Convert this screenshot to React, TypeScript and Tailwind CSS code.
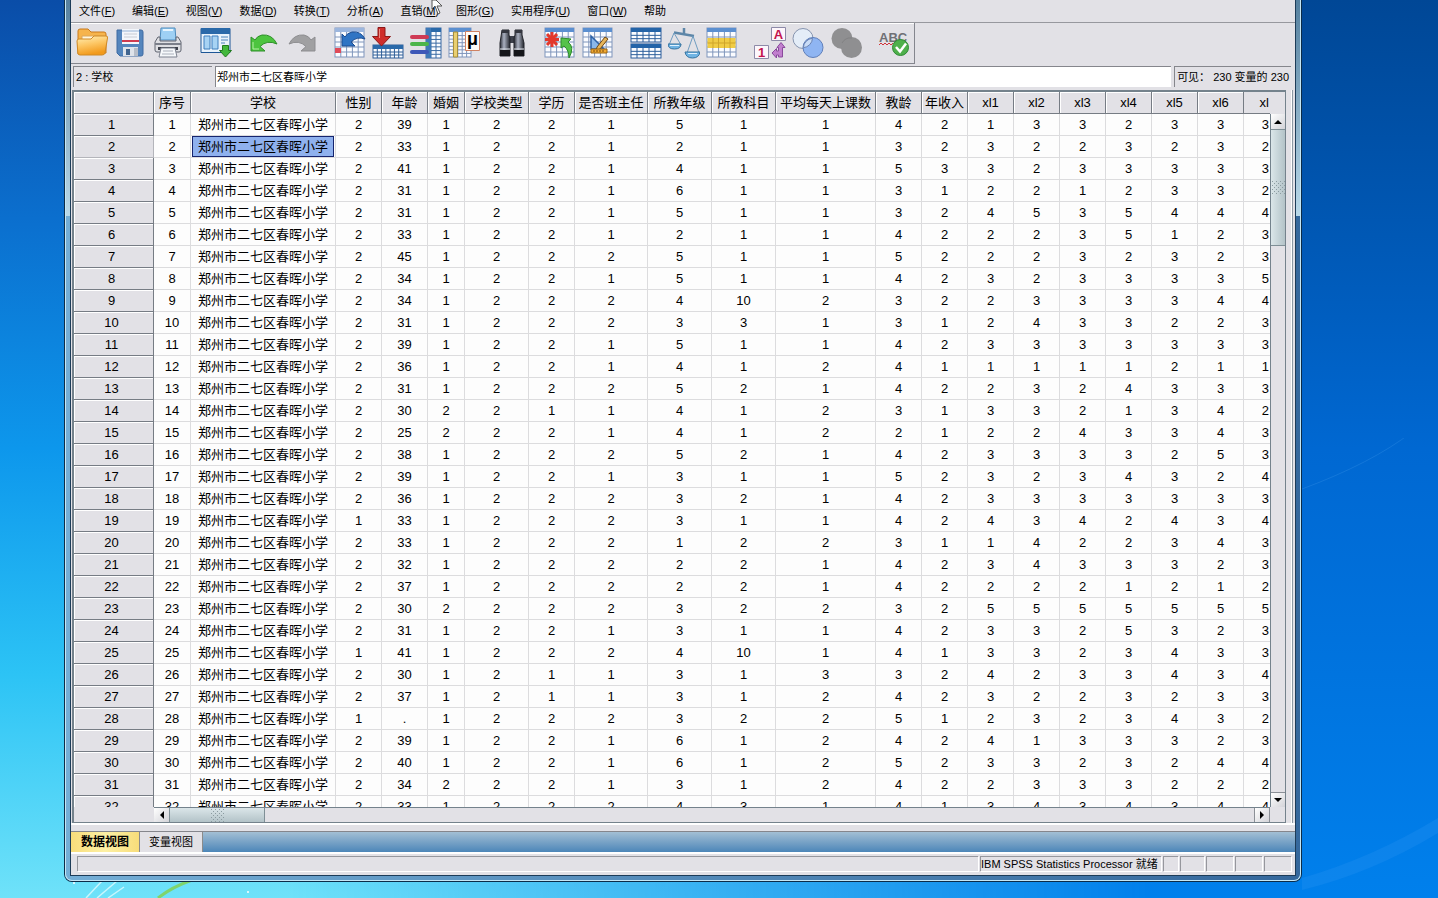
import { useState } from "react";
import type { ReactNode } from "react";
import clsx from "clsx";

const SCHOOL = "郑州市二七区春晖小学";

const menus = [
  { label: "文件", hotkey: "F" },
  { label: "编辑", hotkey: "E" },
  { label: "视图", hotkey: "V" },
  { label: "数据", hotkey: "D" },
  { label: "转换", hotkey: "T" },
  { label: "分析", hotkey: "A" },
  { label: "直销", hotkey: "M" },
  { label: "图形", hotkey: "G" },
  { label: "实用程序", hotkey: "U" },
  { label: "窗口", hotkey: "W" },
  { label: "帮助" },
];

const columns = [
  { name: "序号", width: 37 },
  { name: "学校", width: 145 },
  { name: "性别", width: 46 },
  { name: "年龄", width: 46 },
  { name: "婚姻", width: 37 },
  { name: "学校类型", width: 64 },
  { name: "学历", width: 46 },
  { name: "是否班主任", width: 73 },
  { name: "所教年级", width: 64 },
  { name: "所教科目", width: 64 },
  { name: "平均每天上课数", width: 100 },
  { name: "教龄", width: 46 },
  { name: "年收入", width: 46 },
  { name: "xl1", width: 46 },
  { name: "xl2", width: 46 },
  { name: "xl3", width: 46 },
  { name: "xl4", width: 46 },
  { name: "xl5", width: 46 },
  { name: "xl6", width: 46 },
];

// values after 学校, one line per case
const cases = [
  "2 39 1 2 2 1 5 1 1 4 2 1 3 3 2 3 3 3",
  "2 33 1 2 2 1 2 1 1 3 2 3 2 2 3 2 3 2",
  "2 41 1 2 2 1 4 1 1 5 3 3 2 3 3 3 3 3",
  "2 31 1 2 2 1 6 1 1 3 1 2 2 1 2 3 3 2",
  "2 31 1 2 2 1 5 1 1 3 2 4 5 3 5 4 4 4",
  "2 33 1 2 2 1 2 1 1 4 2 2 2 3 5 1 2 3",
  "2 45 1 2 2 2 5 1 1 5 2 2 2 3 2 3 2 3",
  "2 34 1 2 2 1 5 1 1 4 2 3 2 3 3 3 3 5",
  "2 34 1 2 2 2 4 10 2 3 2 2 3 3 3 3 4 4",
  "2 31 1 2 2 2 3 3 1 3 1 2 4 3 3 2 2 3",
  "2 39 1 2 2 1 5 1 1 4 2 3 3 3 3 3 3 3",
  "2 36 1 2 2 1 4 1 2 4 1 1 1 1 1 2 1 1",
  "2 31 1 2 2 2 5 2 1 4 2 2 3 2 4 3 3 3",
  "2 30 2 2 1 1 4 1 2 3 1 3 3 2 1 3 4 2",
  "2 25 2 2 2 1 4 1 2 2 1 2 2 4 3 3 4 3",
  "2 38 1 2 2 2 5 2 1 4 2 3 3 3 3 2 5 3",
  "2 39 1 2 2 1 3 1 1 5 2 3 2 3 4 3 2 4",
  "2 36 1 2 2 2 3 2 1 4 2 3 3 3 3 3 3 3",
  "1 33 1 2 2 2 3 1 1 4 2 4 3 4 2 4 3 4",
  "2 33 1 2 2 2 1 2 2 3 1 1 4 2 2 3 4 3",
  "2 32 1 2 2 2 2 2 1 4 2 3 4 3 3 3 2 3",
  "2 37 1 2 2 2 2 2 1 4 2 2 2 2 1 2 1 2",
  "2 30 2 2 2 2 3 2 2 3 2 5 5 5 5 5 5 5",
  "2 31 1 2 2 1 3 1 1 4 2 3 3 2 5 3 2 3",
  "1 41 1 2 2 2 4 10 1 4 1 3 3 2 3 4 3 3",
  "2 30 1 2 1 1 3 1 3 3 2 4 2 3 3 4 3 4",
  "2 37 1 2 1 1 3 1 2 4 2 3 2 2 3 2 3 3",
  "1 . 1 2 2 2 3 2 2 5 1 2 3 2 3 4 3 2",
  "2 39 1 2 2 1 6 1 2 4 2 4 1 3 3 3 2 3",
  "2 40 1 2 2 1 6 1 2 5 2 3 3 2 3 2 4 4",
  "2 34 2 2 2 1 3 1 2 4 2 2 3 3 3 2 2 2",
  "2 33 1 2 2 2 4 3 1 4 1 3 4 3 4 3 4 4",
].map((line) => line.split(" "));

function Icon({ children }: { children: ReactNode }) {
  return (
    <svg viewBox="0 0 32 32" className="size-8" aria-hidden="true">
      {children}
    </svg>
  );
}

// small data sheet used by many of the toolbar icons
function Sheet({ x = 1, y = 1, w = 29, h = 29, head = "#5b8fd0", line = "#7f95bb", cols = 5, rows = 5 }) {
  const top = y + 4;
  const stepX = w / cols;
  const stepY = (h - 4) / rows;
  return (
    <g>
      <rect x={x} y={y} width={w} height={h} fill="#fbfcff" stroke={line} />
      <rect x={x} y={y} width={w} height={4} fill={head} />
      {Array.from({ length: cols - 1 }, (_, i) => (
        <path key={`c${i}`} d={`M${x + stepX * (i + 1)} ${top}V${y + h}`} stroke={line} />
      ))}
      {Array.from({ length: rows - 1 }, (_, i) => (
        <path key={`r${i}`} d={`M${x} ${top + stepY * (i + 1)}H${x + w}`} stroke={line} />
      ))}
    </g>
  );
}

function OpenIcon() {
  return (
    <Icon>
      <defs>
        <linearGradient id="folder" x1="0" y1="0" x2="0.3" y2="1">
          <stop offset="0" stopColor="#fff0b8" />
          <stop offset="0.5" stopColor="#fdc765" />
          <stop offset="1" stopColor="#f29a1c" />
        </linearGradient>
      </defs>
      <path d="M2 27V4q0-2 2-2h8l3 3h13q2 0 2 2v19z" fill="#f6b44c" stroke="#c9791b" />
      <path d="M6 9h22v10H6z" fill="#fff6dc" stroke="#dca75a" />
      <path d="M1 14q0-2 2-2h12l3-3h12q2 0 1.500 2L29 26q-.4 2-3 2H4q-2 0-2.200-2z" fill="url(#folder)" stroke="#d08a26" />
    </Icon>
  );
}

function SaveIcon() {
  return (
    <Icon>
      <path d="M3 3h24q2 0 2 2v22q0 2-2 2H6l-3-3z" fill="#5485bd" stroke="#3e6ba2" />
      <path d="M8 2h17v15H8z" fill="#f3f6fb" />
      <path d="M8 4h17" stroke="#c4d4e8" strokeWidth="2" />
      <path d="M8 14h17" stroke="#cf3b50" strokeWidth="2" />
      <path d="M10 7h13M10 10h13" stroke="#c8ccd4" />
      <path d="M9 20h15v9H9z" fill="#dfe3ea" />
      <path d="M12 22h4v6h-4z" fill="#41648f" />
      <path d="M20 21h4v8h-4z" fill="#b7bdc8" />
    </Icon>
  );
}

function PrintIcon() {
  return (
    <Icon>
      <path d="M9 1h14l1 12H8z" fill="#9ed0f4" stroke="#4d8bbd" />
      <path d="M11 3h10" stroke="#e6f5ff" strokeWidth="2" />
      <path d="M6 10h2v4h16v-4h2l3 5v8q0 2-2 2H5q-2 0-2-2v-8z" fill="#dedfe3" stroke="#606470" />
      <path d="M3 17h26" stroke="#7b7f8a" strokeWidth="2" />
      <path d="M6 20h20v3H6z" fill="#3e424c" />
      <path d="M9 21h14l2 9H7z" fill="#f6f8fb" stroke="#7d828f" />
      <path d="M11 24h10M10 27h12" stroke="#aab0bb" />
    </Icon>
  );
}

function RecallIcon() {
  return (
    <Icon>
      <path d="M1 1.500h29v24H1z" fill="#e8f2fb" stroke="#1d5796" />
      <path d="M1 1h29v6H1z" fill="#2a69a9" />
      <path d="M4 9h6v13H4zM12 9h6v13h-6z" fill="#a7d3f4" stroke="#3f7fbd" />
      <path d="M21 10h7M21 13h7M21 16h4" stroke="#4c84bb" />
      <path d="M22.500 18.500h6v5h3L25.500 30l-6-6.500h3z" fill="#43b83c" stroke="#217a1e" />
    </Icon>
  );
}

function UndoIcon() {
  return (
    <Icon>
      <path d="M3 10v14h14l-5-4.500q7-7 17-2.500-5-10-15-9-5 1-7 5z" fill="#4cc43f" stroke="#2d8f28" />
      <path d="M5 15v7h6" fill="none" stroke="#b4f0a5" />
    </Icon>
  );
}

function RedoIcon() {
  return (
    <Icon>
      <path d="M29 10v14H15l5-4.500q-7-7-17-2.500 5-10 15-9 5 1 7 5z" fill="#a0a0a2" stroke="#8d8d90" />
    </Icon>
  );
}

function GoToCaseIcon() {
  return (
    <Icon>
      <Sheet head="#9cb6de" />
      <path d="M1 21h6v5H1z" fill="#e04a58" />
      <path d="M8 7v12h13l-4-4q6-6 14-3-4-8-13-7-5 1-7 5z" fill="#2f74c4" stroke="#1c4d92" />
    </Icon>
  );
}

function GoToVariableIcon() {
  return (
    <Icon>
      <Sheet y={18} h={13} w={30} head="#2a69a9" line="#2e5f98" rows={3} cols={7} />
      <path d="M6 .5h7v9h5.500L9.500 19 .5 9.500H6z" fill="#cf2e2b" stroke="#8b1717" />
      <path d="M7.500 2v9" stroke="#f08a80" />
    </Icon>
  );
}

function VariablesIcon() {
  return (
    <Icon>
      <Sheet x={16} w={15} h={30} head="#2a69a9" line="#3b6ba4" cols={3} rows={7} />
      <path d="M16 1h5v30h-5z" fill="#3d79b8" />
      <path d="M2 10h15" stroke="#cf3b55" strokeWidth="4" strokeLinecap="round" />
      <path d="M2 17h15" stroke="#4bb54a" strokeWidth="4" strokeLinecap="round" />
      <path d="M2 25h15" stroke="#3d58b8" strokeWidth="4" strokeLinecap="round" />
    </Icon>
  );
}

function DescriptivesIcon() {
  return (
    <Icon>
      <Sheet w={22} h={29} head="#5b8fd0" cols={5} rows={7} />
      <path d="M5.500 5h4v25h-4z" fill="#e9cf72" stroke="#a88f3a" />
      <path d="M17.500 4.500h14v19h-14z" fill="#fffdfa" stroke="#cf8263" />
      <text x="24.500" y="18" textAnchor="middle" fontSize="18" fontWeight="700" fontFamily="Liberation Sans, sans-serif">
        μ
      </text>
    </Icon>
  );
}

function FindIcon() {
  return (
    <Icon>
      <defs>
        <linearGradient id="barrel">
          <stop offset="0" stopColor="#2b2d36" />
          <stop offset="0.4" stopColor="#aab0c0" />
          <stop offset="1" stopColor="#23252c" />
        </linearGradient>
      </defs>
      <path d="M12 9h8v7h-8z" fill="#3b3e49" />
      <path d="M6 3h7v5l1 3v18H4V16z" fill="url(#barrel)" stroke="#23252c" />
      <path d="M19 3h7v5l2 8v13H18V11l1-3z" fill="url(#barrel)" stroke="#23252c" />
      <path d="M4 23h10v6H4zM18 23h10v6H18z" fill="#15161a" />
      <path d="M4 22h10M18 22h10" stroke="#dfe3ea" />
      <path d="M6 3h7v3H6zM19 3h7v3h-7z" fill="#34363f" />
    </Icon>
  );
}

function InsertCasesIcon() {
  return (
    <Icon>
      <Sheet />
      <path d="M8 5v15M1 12.500h14M3 7l10 11M13 7 3 18" stroke="#e2382c" strokeWidth="3" />
      <path d="M17 21V11l10 1-3 3q7 5 1 16 0-8-5-12z" fill="#55c24a" stroke="#2c8a2a" />
    </Icon>
  );
}

function InsertVariableIcon() {
  return (
    <Icon>
      <Sheet />
      <path d="M9 9v13h13z" fill="#8ab7ea" stroke="#2d62a8" strokeWidth="1.500" />
      <path d="M23 10l3 2-8 10-4 2 1-4z" fill="#e6b45a" stroke="#6d4714" />
      <path d="M9 22h16v4H9z" fill="#f0a932" stroke="#9b6412" />
      <path d="M12 23v2M15 23v2M18 23v2M21 23v2" stroke="#7a4b0c" />
    </Icon>
  );
}

function SplitIcon() {
  return (
    <Icon>
      <Sheet w={30} h={14} head="#2464a8" line="#2c5f9c" rows={3} />
      <Sheet y={17} w={30} h={14} head="#2464a8" line="#2c5f9c" rows={3} />
    </Icon>
  );
}

function WeightIcon() {
  return (
    <Icon>
      <path d="M16 1v6M6 5.500 26 9" stroke="#5d86a8" strokeWidth="2.500" />
      <path d="M6 6 1 18h12zM25 9l-6 17h12z" fill="none" stroke="#6f9cc0" />
      <path d="M0 17h13q0 5-6.500 5T0 17z" fill="#6fb4e4" stroke="#35729f" />
      <path d="M17 25h15q-1 6-7.500 6T17 25z" fill="#6fb4e4" stroke="#35729f" />
      <path d="M2 18.500h9M20 26.500h9" stroke="#dff2ff" />
    </Icon>
  );
}

function SelectCasesIcon() {
  return (
    <Icon>
      <Sheet />
      <path d="M1.500 11h28v10h-28z" fill="#f0cc45" />
      <path d="M7 11v10M12.500 11v10M18.500 11v10M24 11v10M1.500 16h28" stroke="#cfa52a" />
    </Icon>
  );
}

function ValueLabelsIcon() {
  return (
    <Icon>
      <path d="M17.500.5h14v13h-14z" fill="#fdf6fb" stroke="#8d8aa8" />
      <path d="M.5 18.500h14v13H.5z" fill="#fdf6fb" stroke="#8d8aa8" />
      <text x="24.500" y="12" textAnchor="middle" fontSize="13" fontWeight="700" fill="#c3124e" fontFamily="Liberation Sans, sans-serif">
        A
      </text>
      <text x="7.500" y="30" textAnchor="middle" fontSize="13" fontWeight="700" fill="#c3124e" fontFamily="Liberation Sans, sans-serif">
        1
      </text>
      <path d="M27 15.500l4 5h-2.500V30h-4v-2h-2v3L18 26l4.500-4.500V24h2v-3.500H23z" fill="#c17fce" stroke="#8a4a9d" />
    </Icon>
  );
}

function UseSetsIcon() {
  return (
    <Icon>
      <circle cx="11" cy="11.500" r="10" fill="#e4edf8" stroke="#8795b0" />
      <circle cx="21" cy="20.500" r="10" fill="#8fb5f2" stroke="#5f7fba" />
      <path d="M20.500 11.300A10 10 0 0 1 11.300 20.700 10 10 0 0 1 20.500 11.300z" fill="#c9dcf6" stroke="#6b84b4" />
    </Icon>
  );
}

function ShowAllIcon() {
  return (
    <Icon>
      <circle cx="12" cy="11.500" r="10.500" fill="#8f8f91" />
      <circle cx="21.500" cy="20.500" r="10.500" fill="#8f8f91" />
      <path d="M12 16a10 10 0 0 1 10-5" fill="none" stroke="#828284" />
    </Icon>
  );
}

function SpellIcon() {
  return (
    <Icon>
      <text x="1" y="15" fontSize="13" fontWeight="700" fill="#6f7075" fontFamily="Liberation Sans, sans-serif">
        ABC
      </text>
      <path d="M1 18l2-2 2 2 2-2 2 2 2-2 2 2 2-2" fill="none" stroke="#d0333a" />
      <circle cx="22.500" cy="20.500" r="8" fill="#4fb04c" stroke="#2f8a35" />
      <path d="M18 20l4 4.500 6-8" fill="none" stroke="#fff" strokeWidth="2.500" />
    </Icon>
  );
}

const toolGroups = [
  [
    { label: "打开", icon: <OpenIcon /> },
    { label: "保存", icon: <SaveIcon /> },
    { label: "打印", icon: <PrintIcon /> },
  ],
  [{ label: "重新调用对话框", icon: <RecallIcon /> }],
  [
    { label: "撤销", icon: <UndoIcon /> },
    { label: "重做", icon: <RedoIcon /> },
  ],
  [
    { label: "转到个案", icon: <GoToCaseIcon /> },
    { label: "转到变量", icon: <GoToVariableIcon /> },
    { label: "变量", icon: <VariablesIcon /> },
    { label: "描述统计", icon: <DescriptivesIcon /> },
  ],
  [{ label: "查找", icon: <FindIcon /> }],
  [
    { label: "插入个案", icon: <InsertCasesIcon /> },
    { label: "插入变量", icon: <InsertVariableIcon /> },
  ],
  [
    { label: "拆分文件", icon: <SplitIcon /> },
    { label: "加权个案", icon: <WeightIcon /> },
    { label: "选择个案", icon: <SelectCasesIcon /> },
  ],
  [
    { label: "值标签", icon: <ValueLabelsIcon /> },
    { label: "使用变量集", icon: <UseSetsIcon /> },
    { label: "显示所有变量", icon: <ShowAllIcon /> },
  ],
  [{ label: "拼写检查", icon: <SpellIcon /> }],
];

function MenuBar() {
  return (
    <nav className="flex h-[23px] items-center gap-[17px] border-b border-[#97989e] pl-2 text-[11px]">
      {menus.map((menu) => (
        <button key={menu.label} type="button" className="whitespace-nowrap">
          {menu.label}
          {menu.hotkey && (
            <>
              (<span className="underline underline-offset-1">{menu.hotkey}</span>)
            </>
          )}
        </button>
      ))}
    </nav>
  );
}

function Toolbar() {
  return (
    <div className="flex h-[41px] w-fit items-center gap-4 border-r border-b border-[#84868e] pr-1 pl-[5px] shadow-[inset_0_1px_#fff]">
      {toolGroups.map((group) => (
        <div key={group[0].label} className="flex gap-1.5">
          {group.map((tool) => (
            <button key={tool.label} type="button" aria-label={tool.label}>
              {tool.icon}
            </button>
          ))}
        </div>
      ))}
    </div>
  );
}

function CellEditor() {
  return (
    <div className="mb-px flex h-[25px] gap-[3px] py-0.5 pr-1 pl-0.5 text-[11px] leading-[18px]">
      <label htmlFor="cell" className="w-[139px] border-t border-l border-[#85868c] pl-0.5 leading-5">
        2 : 学校
      </label>
      <input
        id="cell"
        defaultValue={SCHOOL}
        className="min-w-0 flex-1 border-t border-l border-[#85868c] bg-white pl-px outline-none"
      />
      <div className="border-t border-l border-[#85868c] px-0.5 leading-5 whitespace-nowrap">可见： 230 变量的 230</div>
    </div>
  );
}

function DataTable() {
  const head = "border-r border-b border-[#767c84] bg-[#e2e1e6] p-0 font-normal shadow-[inset_1px_1px_#fff]";
  const cell = "border-r border-b border-[#dcdcde] p-0";
  return (
    <table className="w-full table-fixed border-separate border-spacing-0 bg-[#fdfdfd] text-center text-[13px] leading-[21px] whitespace-nowrap">
      <colgroup>
        <col className="w-20" />
        {columns.map((col) => (
          <col key={col.name} style={{ width: col.width }} />
        ))}
        <col />
      </colgroup>
      <thead>
        <tr className="h-[22px]">
          <td className={head} />
          {columns.map((col) => (
            <th key={col.name} scope="col" className={head}>
              {col.name}
            </th>
          ))}
          <th scope="col" className="border-b border-[#767c84] bg-[#e2e1e6] p-0 pr-px text-right font-normal">
            xl
          </th>
        </tr>
      </thead>
      <tbody>
        {cases.map((values, i) => (
          <tr key={i} className="h-[22px]">
            <th scope="row" className={clsx(head, "pr-1", i === 1 && "border-[#b4b5bb]")}>
              {i + 1}
            </th>
            <td className={cell}>{i + 1}</td>
            <td className={cell}>
              {i === 1 ? (
                <div className="mx-px border border-[#15246e] bg-[#8fb1ee] leading-[19px]">{SCHOOL}</div>
              ) : (
                SCHOOL
              )}
            </td>
            {values.map((value, j) => (
              <td key={j} className={j === values.length - 1 ? "border-b border-[#dcdcde] p-0 pr-px text-right" : cell}>
                {value}
              </td>
            ))}
          </tr>
        ))}
      </tbody>
    </table>
  );
}

function Arrow({ d, label, className }: { d: string; label: string; className: string }) {
  return (
    <button
      type="button"
      aria-label={label}
      className={clsx("grid shrink-0 place-items-center bg-linear-to-br from-white to-[#d3d3d8]", className)}
    >
      <svg viewBox="0 0 8 8" className="size-2" aria-hidden="true">
        <path d={d} fill="#000" />
      </svg>
    </button>
  );
}

function Grip() {
  return (
    <svg viewBox="0 0 13 13" className="size-[13px]" aria-hidden="true">
      <defs>
        <pattern id="dots" width="4" height="4" patternUnits="userSpaceOnUse">
          <path d="M0 0h1v1H0zM2 2h1v1H2z" fill="#8b9ba0" />
        </pattern>
      </defs>
      <rect width="13" height="13" fill="url(#dots)" />
    </svg>
  );
}

function DataPane() {
  return (
    <div className="ml-px flex min-h-0 flex-1 gap-1.5 pr-0.5">
      <div className="flex min-w-0 flex-1 flex-col border-t-2 border-r border-b border-l-2 border-[#74828c]">
        <div className="flex min-h-0 flex-1">
          <div className="min-w-0 flex-1 overflow-hidden">
            <DataTable />
          </div>
          <div className="flex w-[15px] flex-col">
            <div className="h-[22px]" />
            <div className="flex min-h-0 flex-1 flex-col border-l border-[#74828c]">
              <Arrow d="M4 2 8 6H0z" label="向上滚动" className="h-[15px]" />
              <div className="grid h-[117px] place-items-center border-y border-[#7f8f96] bg-linear-to-r from-[#dbe6e9] to-[#b3c3c8]">
                <Grip />
              </div>
              <div className="flex-1" />
              <Arrow d="M0 2h8L4 6z" label="向下滚动" className="h-[15px] border-t border-[#8b8f96]" />
            </div>
          </div>
        </div>
        <div className="flex h-[15px]">
          <div className="w-20" />
          <div className="flex min-w-0 flex-1 border-t border-[#74828c]">
            <Arrow d="M6 0v8L2 4z" label="向左滚动" className="w-[15px]" />
            <div className="grid w-24 place-items-center border-x border-[#7f8f96] bg-linear-to-b from-[#dbe6e9] to-[#b3c3c8]">
              <Grip />
            </div>
            <div className="flex-1" />
            <Arrow d="M2 0v8l4-4z" label="向右滚动" className="w-4 border-x border-[#8b8f96]" />
          </div>
          <div className="w-[15px]" />
        </div>
      </div>
      <div className="w-px bg-[#8d99a3] shadow-[-1px_0_#fff]" />
    </div>
  );
}

function ViewTabs() {
  const [view, setView] = useState("data");
  const tabs = [
    { id: "data", label: "数据视图" },
    { id: "variable", label: "变量视图" },
  ];
  return (
    <div role="tablist" className="flex h-5 bg-linear-to-b from-[#a3bfd4] to-[#4c86b8]">
      {tabs.map((tab) => (
        <button
          key={tab.id}
          type="button"
          role="tab"
          aria-selected={view === tab.id}
          onClick={() => setView(tab.id)}
          className={clsx(
            "border-r border-[#8b8b8b] leading-5",
            view === tab.id
              ? "bg-linear-to-r from-[#f8dd7a] via-[#fdf0a4] to-[#f8dd7a] px-2.5 text-[12px] font-bold"
              : "bg-[#e2e1e6] px-[9px] text-[11px]"
          )}
        >
          {tab.label}
        </button>
      ))}
    </div>
  );
}

function StatusBar() {
  const box = "border-t border-l border-[#96979d] shadow-[1px_1px_#fff]";
  return (
    <footer className="flex h-[23px] gap-0.5 border-t-2 border-white pt-0.5 pr-1 pb-1 pl-1.5 text-[11px] leading-[14px]">
      <div className={clsx(box, "flex-1")} />
      <div className={clsx(box, "w-[181px] whitespace-nowrap")}>IBM SPSS Statistics Processor 就绪</div>
      <div className={clsx(box, "w-[15px]")} />
      <div className={clsx(box, "w-6")} />
      <div className={clsx(box, "w-[27px]")} />
      <div className={clsx(box, "w-[27px]")} />
      <div className={clsx(box, "w-[27px]")} />
    </footer>
  );
}

function Wallpaper() {
  return (
    <>
      <div className="absolute inset-0 bg-linear-to-b from-[#004796] via-[#0068d2] to-[#0080ec]" />
      <div className="absolute inset-0 bg-[linear-gradient(#0a4da8_0%,#0b70cf_25%,#0d97ec_50%,#2cc3f5_75%,#6fe2f9_100%)] mask-r-from-20% mask-r-to-80%" />
      <svg viewBox="0 0 300 20" className="absolute bottom-0 left-0 h-5 w-[300px]" aria-hidden="true">
        <path d="M158 20Q172 9 192 2" stroke="#7fd46c" strokeWidth="3" fill="none" />
        <path d="M86 20 102 3M97 20l20-17M108 20l16-11" stroke="#c8f6fd" strokeWidth="1.500" />
        <circle cx="74" cy="5" r="1" fill="#fff" />
        <circle cx="248" cy="14" r="1" fill="#fff" />
      </svg>
      <svg viewBox="0 0 136 460" className="absolute right-0 bottom-0 h-[460px] w-[136px]" aria-hidden="true">
        <path d="M0 51Q70 25 110 -6" stroke="#2f8ce4" strokeOpacity="0.4" fill="none" />
        <path d="M0 440Q70 420 136 380V395Q70 435 0 452z" fill="#2f97f2" fillOpacity="0.25" />
      </svg>
    </>
  );
}

export default function App() {
  return (
    <div className="relative h-screen overflow-hidden font-['Liberation_Sans','Noto_Sans_CJK_SC',sans-serif] text-black">
      <Wallpaper />
      <div className="relative flex h-full pr-[136px] pb-4 pl-16">
        {/* window frame */}
        <div className="flex min-w-0 flex-1 rounded-b-lg border-x border-b border-[#0c2c48] bg-linear-to-r from-[#74aed6] to-[#35689c]">
          <div className="flex min-w-0 flex-1 rounded-b-[7px] border-x border-b border-[#c4e6f5] bg-[linear-gradient(#55809f_0,#b9d9e9_216px,transparent_216px)] px-1 pb-1">
            <main className="flex min-w-0 flex-1 flex-col border-x border-b border-[#1d3c58] bg-[#e2e1e6]">
              <MenuBar />
              <Toolbar />
              <CellEditor />
              <DataPane />
              <div className="h-[9px] border-t-2 border-b border-t-white border-b-[#85868c]" />
              <ViewTabs />
              <StatusBar />
            </main>
          </div>
        </div>
      </div>
      {/* mouse pointer */}
      <svg viewBox="0 0 12 16" className="pointer-events-none absolute top-0 left-[431px] h-4 w-3" aria-hidden="true">
        <path d="M1 0v9l3-3 3 8 2-1-3-7h5L5 0z" fill="#fff" stroke="#555" />
      </svg>
    </div>
  );
}
